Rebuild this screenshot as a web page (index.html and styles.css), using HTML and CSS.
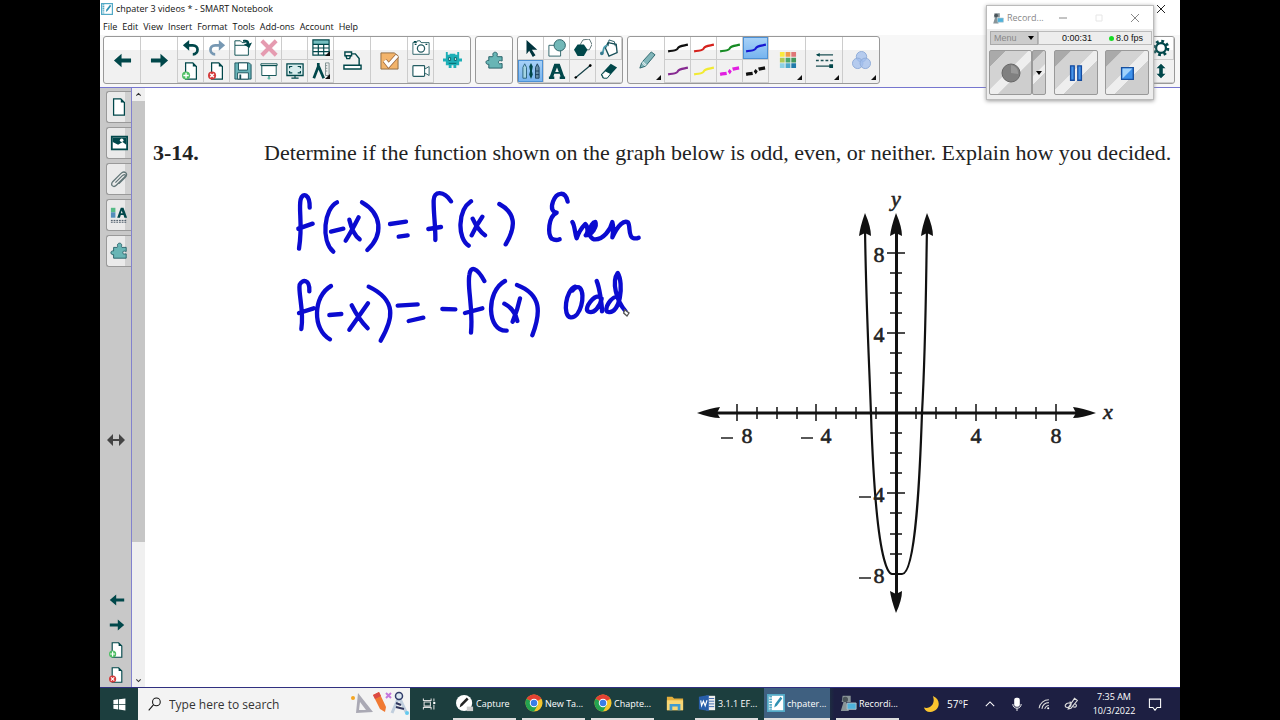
FILE: index.html
```html
<!DOCTYPE html>
<html lang="en">
<head>
<meta charset="utf-8">
<title>chpater 3 videos * - SMART Notebook</title>
<link rel="stylesheet" href="styles.css">
</head>
<body>
<svg class="sprite" aria-hidden="true">
  <symbol id="back" viewBox="0 0 20 20"><path d="M1 10 9 3v5h10v4H9v5z" fill="#00474a"/></symbol>
  <symbol id="forward" viewBox="0 0 20 20"><path d="M19 10 11 3v5H1v4h10v5z" fill="#00474a"/></symbol>
  <symbol id="page" viewBox="0 0 20 20"><path d="M4 1h8l4 4v14H4z" fill="#fff" stroke="#00474a" stroke-width="1.400"/><path d="M12 1v4h4z" fill="#00474a"/></symbol>
  <symbol id="page-add" viewBox="0 0 20 20"><use href="#page"/><circle cx="4.500" cy="15" r="4.500" fill="#4fbf65"/><path d="M4.500 12v6M1.500 15h6" stroke="#fff" stroke-width="1.500"/></symbol>
  <symbol id="page-del" viewBox="0 0 20 20"><use href="#page"/><circle cx="4.500" cy="15" r="4.500" fill="#d43b3b"/><path d="m2.500 13 4 4m0-4-4 4" stroke="#fff" stroke-width="1.500"/></symbol>
  <symbol id="puzzle" viewBox="0 0 20 20"><path d="M4 6h4c1-1 0-2 .3-3C9 .500 13 .800 13 3.500c0 1-.7 1.500.2 2.500H18v4.500c-1.500 0-2-.8-3-.3-1.200.8-1 3 .4 3.300 1 .2 1.600-.6 2.600-.3V18H4v-4c-4 .8-4-5 0-4z" fill="#68b5b5" stroke="#245f66"/></symbol>
  <symbol id="notebook" viewBox="0 0 20 20"><rect x="1" y="1" width="18" height="18" fill="#fff" stroke="#52a9c6" stroke-width="2"/><path d="M4 2v16" stroke="#52a9c6" stroke-width="3" stroke-dasharray="2 1"/><path d="M8 15 9 11l6-8 2 2-6 8z" fill="#2f91b3"/></symbol>
  <symbol id="chrome" viewBox="0 0 20 20"><circle cx="10" cy="10" r="9.500" fill="#f4c52c"/><path d="M10 10 1.800 5.300a9.500 9.500 0 0 1 16.400 0z" fill="#e34133"/><path d="M10 10 1.800 5.300A9.500 9.500 0 0 0 10 19.500l4-7z" fill="#24a350"/><circle cx="10" cy="10" r="4.700" fill="#fff"/><circle cx="10" cy="10" r="3.600" fill="#397de8"/></symbol>
  <symbol id="recorder" viewBox="0 0 20 20"><path d="M4 2h9v7H8l3 10H2L5 9H3z" fill="#899498"/><circle cx="7" cy="6" r="3" fill="#4b555b"/><path d="M9 10h10v7H9z" fill="#4eb2dc" stroke="#b6c5c9"/></symbol>
  <symbol id="squiggle" viewBox="0 0 20 20"><path d="M1 13c5-1 8 0 9-3 1-2 4-2 9-3" fill="none" stroke="currentColor"/></symbol>
  <symbol id="resize" viewBox="0 0 20 20"><path d="m1 10 6-6v5h6V4l6 6-6 6v-5H7v5z" fill="#444"/></symbol>
</svg>

<div class="desktop">
  <header class="app-head">
    <div class="titlebar"><svg class="i12"><use href="#notebook"/></svg><span>chpater 3 videos * - SMART Notebook</span>
      <button class="app-close" aria-label="Close"><svg viewBox="0 0 10 10"><path d="m1 1 8 8m0-8L1 9" stroke="#222"/></svg></button></div>
    <nav class="menubar" aria-label="Application menu"><button>File</button><button>Edit</button><button>View</button><button>Insert</button><button>Format</button><button>Tools</button><button>Add-ons</button><button>Account</button><button>Help</button></nav>
  </header>

  <div class="toolbar" role="toolbar" aria-label="Notebook tools">
    <div class="group">
      <button class="tall" aria-label="Previous page"><svg><use href="#back"/></svg></button>
      <button class="tall" aria-label="Next page"><svg><use href="#forward"/></svg></button>
      <button aria-label="Undo"><svg viewBox="0 0 20 20"><path d="M4 7h8c7 0 7 10 0 10" fill="none" stroke="#00474a" stroke-width="3"/><path d="m1 7 7-6v12z" fill="#00474a"/></svg></button>
      <button aria-label="Add page"><svg><use href="#page-add"/></svg></button>
      <button aria-label="Redo"><svg viewBox="0 0 20 20"><path d="M16 7H8c-7 0-7 10 0 10" fill="none" stroke="#7798b3" stroke-width="3"/><path d="m19 7-7-6v12z" fill="#7798b3"/></svg></button>
      <button aria-label="Delete page"><svg><use href="#page-del"/></svg></button>
      <button aria-label="Open"><svg viewBox="0 0 20 20"><path d="M1 7V2h6l2 2h4M1 7h15v11H1z" fill="#fff" stroke="#00474a"/><path d="M10 1c5-1 7 1 7 4l3-1-3 6-6-4 3-1c0-2-2-2-4-2z" fill="#00474a"/></svg></button>
      <button aria-label="Save"><svg viewBox="0 0 20 20"><path d="M1 1h16l2 2v16H1z" fill="#69b3b8" stroke="#174f58"/><path d="M5 1h10v8H5zM4 12h12v7H4z" fill="#fff" stroke="#174f58"/><path d="M7 14v5" stroke="#174f58" stroke-width="2"/></svg></button>
      <button aria-label="Delete"><svg viewBox="0 0 20 20"><path d="m2 2 16 16m0-16L2 18" stroke="#e59bb0" stroke-width="4.500"/></svg></button>
      <button aria-label="Screen shade"><svg viewBox="0 0 20 20"><path d="M1 2h18v2H1zm1 2h16v11H2z" fill="#fff" stroke="#00474a"/><path d="M10 15v3" stroke="#00474a"/><circle cx="10" cy="18" r="1.500" fill="#6ba"/></svg></button>
      <button aria-label="Unused" disabled></button>
      <button aria-label="Full screen"><svg viewBox="0 0 20 20"><path d="M1 2h18v13H1z" fill="#d7eced" stroke="#00474a" stroke-width="1.400"/><path d="M4 7V5h3m6 0h3v2M4 10v2h3m6 0h3v-2M10 15v3m-4 0h8" fill="none" stroke="#00474a" stroke-width="1.300"/></svg></button>
      <button class="more" aria-label="Table"><svg viewBox="0 0 20 20"><path d="M1 1h18v18H1z" fill="#fff"/><path d="M1 1h18v5H1z" fill="#75bec0"/><path d="M1 1h18v17H1zM1 6h18M1 10h18M1 14h18M7 6v12m6-12v12" fill="none" stroke="#00474a" stroke-width="1.300"/></svg></button>
      <button class="more" aria-label="Measurement tools"><svg viewBox="0 0 20 20"><path d="M7 1v4L2 18M7 4l6 14" fill="none" stroke="#00474a" stroke-width="3"/><path d="M15 1h4v14h-4zm0 3h2m-2 3h2m-2 3h2" fill="#eee" stroke="#798b8b"/></svg></button>
      <button class="tall" aria-label="Document camera"><svg viewBox="0 0 20 20"><path d="M2 1h7v4H2zm1 4 1 3h3l1-3M9 3h4l4 5v7" fill="none" stroke="#00474a" stroke-width="1.500"/><path d="M1 15h18v4H1z" fill="#fff" stroke="#00474a" stroke-width="1.500"/></svg></button>
      <button class="tall" aria-label="Response"><svg viewBox="0 0 20 20"><path d="M1 2h14l4 3v14H1z" fill="#f3b46b" stroke="#926d42"/><path d="m5 10 4 5 9-10" fill="none" stroke="#9b6840" stroke-width="5"/><path d="m5 10 4 5 9-10" fill="none" stroke="#fff" stroke-width="3.500"/></svg></button>
      <button aria-label="Capture image"><svg viewBox="0 0 20 20"><path d="M1 4h4l1-2h3l1 2h9v13H1z" fill="#fff" stroke="#245c62"/><circle cx="10" cy="10.500" r="4" fill="none" stroke="#245c62" stroke-width="1.400"/><path d="M3 6h2M15 6h2M2 3h3" stroke="#00474a" stroke-width="1.500"/></svg></button>
      <button aria-label="Record video"><svg viewBox="0 0 20 20"><rect x="1" y="4" width="13" height="12" rx="1" fill="#fff" stroke="#245c62" stroke-width="1.300"/><path d="m14 8 5-3v10l-5-3z" fill="#fff" stroke="#245c62"/></svg></button>
      <button class="tall" aria-label="Activity monster"><svg viewBox="0 0 20 20"><path d="M3 1h2v3h2V3h6v1h2V1h2v7h3v3h-3v4h-3v3h-3v-3H9v3H6v-3H3v-4H0V8h3z" fill="#1dafb7"/><path d="M6 7h2v3H6zm6 0h2v3h-2zM6 13h8" fill="#fff" stroke="#08666d"/></svg></button>
    </div>
    <div class="group"><button class="tall" aria-label="Add-ons"><svg><use href="#puzzle"/></svg></button></div>
    <div class="group">
      <button aria-label="Select"><svg viewBox="0 0 20 20"><path d="m5 1 12 11h-6l4 6-3 2-4-7-3 4z" fill="#00343d"/></svg></button>
      <button class="chosen" aria-label="Pens"><svg viewBox="0 0 20 20"><path d="m1 6 2-4 2 4v12H1z" fill="#a4d5e4" stroke="#285e78"/><path d="m8 5 2-4 2 4-1 5 1 4-2 5-2-5 1-4z" fill="#00474a"/><path d="m15 6 2-4 2 4v12h-4zm0 4h4m-4 4h4" fill="#668da5" stroke="#193d59"/></svg></button>
      <button aria-label="Shapes"><svg viewBox="0 0 20 20"><path d="M1 7h13v12H1z" fill="#fff" stroke="#245c62"/><circle cx="13" cy="7" r="6.300" fill="#72b8b8" stroke="#245c62"/></svg></button>
      <button aria-label="Text"><svg viewBox="0 0 20 20"><path d="M7 2h6l5 14h1v3h-6v-3h1l-1-3H7l-1 3h1v3H1v-3h1zM10 6l-2 5h4z" fill="#00474a" fill-rule="evenodd"/></svg></button>
      <button aria-label="Regular polygons"><svg viewBox="0 0 20 20"><path d="m10 1 7-1 3 6-3 6h-7L7 6z" fill="#fff" stroke="#526b6d"/><path d="M4 6h7l4 6-4 7H4l-4-7z" fill="#00474a"/></svg></button>
      <button aria-label="Line"><svg viewBox="0 0 20 20"><path d="M1 18 19 3" stroke="#143f46" stroke-width="1.300"/><circle cx="2" cy="17" r="1.300"/><circle cx="18" cy="4" r="1.500"/></svg></button>
      <button aria-label="Fill"><svg viewBox="0 0 20 20"><path d="m9 4 9 2 1 9-9 4-4-9z" fill="#fff" stroke="#174f58" stroke-width="1.500"/><path d="m9 8 1-7 6 2 1 5" fill="none" stroke="#174f58"/><path d="M8 7c-4 1-4 4-5 9" fill="none" stroke="#489cae" stroke-width="2"/><circle cx="2" cy="16" r="2" fill="#377b90"/></svg></button>
      <button aria-label="Eraser"><svg viewBox="0 0 20 20"><path d="m1 14 11-12 7 4L8 18H3z" fill="#00474a"/><path d="m2 14 4-4 6 3-4 5H4z" fill="#fff" stroke="#00474a"/></svg></button>
    </div>
    <div class="group">
      <button class="tall more" aria-label="Pen type"><svg viewBox="0 0 20 20"><path d="m3 18 2-6L15 1l4 3L9 16z" fill="#80b5b9" stroke="#2b666d"/><path d="m5 12 4 4m-3-5 4 4" stroke="#fff"/></svg></button>
      <button class="ink-pen black" aria-label="Black pen"><svg><use href="#squiggle"/></svg></button>
      <button class="ink-pen purple" aria-label="Purple pen"><svg><use href="#squiggle"/></svg></button>
      <button class="ink-pen red" aria-label="Red pen"><svg><use href="#squiggle"/></svg></button>
      <button class="ink-pen yellow" aria-label="Yellow pen"><svg><use href="#squiggle"/></svg></button>
      <button class="ink-pen green" aria-label="Green pen"><svg><use href="#squiggle"/></svg></button>
      <button class="ink-pen magenta dashed" aria-label="Magenta dashed pen"><svg><use href="#squiggle"/></svg></button>
      <button class="ink-pen blue chosen" aria-label="Blue pen"><svg><use href="#squiggle"/></svg></button>
      <button class="ink-pen black dashed" aria-label="Black dashed pen"><svg><use href="#squiggle"/></svg></button>
      <button class="tall more" aria-label="Colors"><svg viewBox="0 0 20 20"><path d="M2 1h5v5H2z" fill="#fbea3d"/><path d="M8 1h5v5H8z" fill="#f09b49"/><path d="M14 1h5v5h-5z" fill="#df7777"/><path d="M2 7h5v5H2z" fill="#b0c956"/><path d="M8 7h5v5H8z" fill="#4aa56c"/><path d="M14 7h5v5h-5z" fill="#42975c"/><path d="M2 13h5v5H2z" fill="#8dd1e5"/><path d="M8 13h5v5H8z" fill="#4ba8cb"/><path d="M14 13h5v5h-5z" fill="#207baa"/></svg></button>
      <button class="tall more" aria-label="Line style"><svg viewBox="0 0 20 20"><path d="M2 4h17M1 16h15" stroke="#1d5054" stroke-width="1.300"/><path d="M1 10h18" stroke="#1d5054" stroke-width="1.500" stroke-dasharray="3 2"/><path d="m1 4 4-2v4zm14 10h4v4h-4z" fill="#00474a"/></svg></button>
      <button class="tall more" aria-label="Transparency"><svg viewBox="0 0 20 20"><g fill="#a0bdec" fill-opacity=".75" stroke="#8facd8"><circle cx="10" cy="6" r="5.500"/><circle cx="6" cy="13" r="5.500"/><circle cx="14" cy="13" r="5.500"/></g></svg></button>
    </div>
    <div class="group settings">
      <button aria-label="Settings"><svg viewBox="0 0 20 20"><circle cx="10" cy="10" r="7.500" fill="none" stroke="#00474a" stroke-width="3.500" stroke-dasharray="3 2.900"/><circle cx="10" cy="10" r="5.500" fill="none" stroke="#00474a" stroke-width="2.500"/></svg></button>
      <button aria-label="Move toolbar"><svg viewBox="0 0 20 20"><path d="m10 2 5 5h-3v6h3l-5 5-5-5h3V7H5z" fill="#00474a"/></svg></button>
    </div>
  </div>

  <main class="workspace">
    <aside class="sidebar">
      <div class="tabs">
        <button aria-label="Page sorter"><svg><use href="#page"/></svg></button>
        <button aria-label="Gallery"><svg viewBox="0 0 20 20"><path d="M2 3h17v14H2z" fill="#fff" stroke="#00474a" stroke-width="2"/><path d="M3 4h15v8l-4-3-5 3-6-3z" fill="#00474a"/><circle cx="13" cy="7" r="2" fill="#fff"/></svg></button>
        <button aria-label="Attachments"><svg viewBox="0 0 20 20"><path d="M6 14 14 6c3-2 4 0 2 2l-9 9c-3 3-7 0-4-4l9-9c4-4 9 0 5 4l-7 7" fill="none" stroke="#617577" stroke-width="1.400"/></svg></button>
        <button aria-label="Properties"><svg viewBox="0 0 20 20"><path d="M1 2h5v5H1z" fill="#56bb86"/><path d="M1 7h5v6H1z" fill="#548ebc"/><path d="M12 2h3l4 11h-3l-1-3h-3l-1 3H8zm1 3-1 3h2z" fill="#00474a" fill-rule="evenodd"/><path d="M1 16h18M1 18h18" stroke="#345" stroke-dasharray="2 1"/></svg></button>
        <button aria-label="Add-on tab"><svg><use href="#puzzle"/></svg></button>
      </div>
      <div class="resizer"><button aria-label="Resize sidebar"><svg><use href="#resize"/></svg></button></div>
      <div class="page-actions">
        <button aria-label="Previous"><svg><use href="#back"/></svg></button>
        <button aria-label="Next"><svg><use href="#forward"/></svg></button>
        <button aria-label="New page"><svg><use href="#page-add"/></svg></button>
        <button aria-label="Remove page"><svg><use href="#page-del"/></svg></button>
      </div>
    </aside>
    <div class="scrollbar" aria-hidden="true">
      <svg viewBox="0 0 12 12"><path d="m4 7 2-2 2 2" fill="none" stroke="#333"/></svg>
      <span class="thumb"></span><span class="track"></span>
      <svg viewBox="0 0 12 12"><path d="m4 5 2 2 2-2" fill="none" stroke="#333"/></svg>
    </div>
    <article class="lesson">
      <div class="question"><strong>3-14.</strong><p>Determine if the function shown on the graph below is odd, even, or neither. Explain how you decided.</p></div>
      <div class="work">
        <svg class="ink" viewBox="0 0 1140 510" role="img" aria-label="Handwritten: f(-x) = f(x) Even, f(-x) = -f(x) Odd">
          <g fill="none" stroke="#0b0bd0" stroke-width="13" stroke-linecap="round" stroke-linejoin="round">
            <path d="M89 83C90 42 68 36 62 58 55 90 69 130 57 206M55 146l43-15M171 67C132 86 122 181 160 215M153 155l37-9M208 119q10 43 31 59M236 112q-22 43-39 70M246 67C306 101 311 165 262 210M330 132l48-7M356 170l27-4"/>
            <path d="M513 64C492 32 461 32 461 61c-1 37 6 77 5 119M445 147l38-6M573 64C532 92 532 176 566 197M578 116q16 35 37 50M607 110q-17 24-32 56M658 72c47 26 53 64 19 121"/>
            <path d="M863 65C856 31 829 36 819 65c-8 22 0 31 11 33-26 12-27 65-15 78q12 7 24 2M877 126c8 11 7 33 13 49 5-15 11-28 26-43 9 9 8 29 1 34 19-1 35-27 29-40-16 1-27 46-4 52 28 3 50-30 55-52 5 17 2 33 0 46 18-39 35-52 47-45 8 13 0 41 15 47q8 3 17-1"/>
            <path d="M88 334C90 297 67 297 59 314c-5 25 14 80 5 133M57 399l44-14M153 318C98 349 97 449 150 478M148 405l36-3M215 376q21 42 48 69M264 370q-26 37-56 79M266 320C352 361 340 416 302 482M353 377l60-4M386 423l44-10"/>
            <path d="M487 387l39 1M613 303C591 262 571 256 568 285c-7 41 12 92 5 173M555 399l52-14M675 303C616 335 621 456 680 452M673 371q31 16 39 52M720 355q-7 33-22 70M711 315C787 344 782 400 757 466"/>
            <path d="M886 320C856 330 847 409 872 412c29 3 46-68 28-88q-9-8-22 7M950 303c8 18 16 71 16 91M960 351c-17-9-49 33-36 43 18 10 37-16 41-38M1017 351c-21-8-51 41-32 45 36 7 47-86 28-117-18 25-5 83 24 115"/>
          </g>
          <path d="m1034 389 13 10-6 9-10-9z" fill="#fff" stroke="#555" stroke-width="4"/>
        </svg>
        <svg class="graph" viewBox="0 0 450 440" role="img" aria-label="Graph of an even function with minimum at negative eight">
          <g fill="none" stroke="#111" stroke-width="1.500">
            <path d="M57 224v17M77 227v12M97 227v12M117 227v12M136 224v17M156 227v12M176 227v12M196 227v12M236 227v12M256 227v12M276 227v12M296 224v17M316 227v12M336 227v12M356 227v12M376 224v17"/>
            <path d="M207 73h18M210 93h12M210 113h12M210 133h12M207 153h18M210 173h12M210 193h12M210 213h12M210 253h12M210 273h12M210 293h12M207 313h18M210 333h12M210 354h12M210 374h12"/>
            <path stroke-width="3" d="M28 233h376M216.500 45v374"/>
            <path stroke-width="2.200" d="M185 48C186 125 189 178 191 234c2 60 5 115 13 145q4 15 8 15h10C236 394 240 292 242 233 246 160 246 95 247 48"/>
          </g>
          <path fill="#111" d="M17 233q14-5 23-6l-3 6 3 5q-9 0-23-5M416 233q-14-5-23-6l3 6-3 5q9 0 23-5M216 33q-5 14-6 23l6-3 6 3q0-9-6-23M185 33q-5 14-6 23l6-3 6 3q0-9-6-23M247 33q-5 14-6 23l6-3 6 3q0-9-6-23M216 433q-5-14-6-22l6 3 6-3q0 9-6 22"/>
          <g class="labels"><text x="199" y="82">8</text><text x="199" y="162">4</text><text x="199" y="322">4</text><text x="199" y="403">8</text><text x="67" y="263">8</text><text x="146" y="263">4</text><text x="296" y="263">4</text><text x="376" y="263">8</text><text class="axis" x="216" y="26">y</text><text class="axis" x="428" y="239">x</text></g>
          <path d="M41 258h12M121 258h12M179 317h12M179 398h12" stroke="#222" stroke-width="1.500"/>
        </svg>
      </div>
    </article>
  </main>

  <footer class="taskbar">
    <button class="start" aria-label="Start"><svg viewBox="0 0 20 20"><path d="M3 5 9 4v6H3zm7-1 8-1v7h-8zM3 11h6v6l-6-1zm7 0h8v7l-8-1z" fill="#fff"/></svg></button>
    <label class="search"><svg class="i14" viewBox="0 0 20 20"><circle cx="12" cy="7" r="5.500" fill="none" stroke="#111" stroke-width="1.500"/><path d="m8 11-7 8" stroke="#111" stroke-width="1.500"/></svg><input type="text" placeholder="Type here to search" aria-label="Type here to search">
      <svg class="tools-art" viewBox="0 0 60 28"><circle cx="3" cy="8" r="2" fill="#f5a623"/><path d="m8 3 15 19-17 1zm2 9-1 8h7z" fill="#aaa9b4" fill-rule="evenodd"/><path d="m23 5 6-3 7 15-1 5-5-3z" fill="#f07932"/><path d="m23 5 6-3 2 4-6 3z" fill="#db4944"/><path d="m36 3 5 5m0-5-5 5" stroke="#c477dc" stroke-width="2"/><path d="m48 9-6 14M50 9l6 13" stroke="#c0cedd" stroke-width="3"/><circle cx="49" cy="6" r="3.500" fill="#dce8f0" stroke="#313c69" stroke-width="1.500"/><path d="m46 17 8 2M46 13l5 2" stroke="#30375d" stroke-width="2"/><circle cx="57" cy="23" r="2" fill="#64c9ee"/></svg></label>
    <button class="task-view" aria-label="Task view"><svg viewBox="0 0 20 20"><path d="M2 2v3h11V2M3 7h9v6H3zM2 18v-3h11v3M17 2v4m0 5v7" fill="none" stroke="#ddd" stroke-width="1.500"/><path d="M16 7h3v3h-3z" fill="#fff"/></svg></button>
    <div class="tasks">
      <button><svg viewBox="0 0 20 20"><circle cx="9" cy="10" r="9" fill="#fff"/><path d="m4 15 1-4 7-7 2 2-7 7z" fill="#222"/><path d="M12 14h7v5h-7z" fill="#ccc"/></svg><span>Capture</span></button>
      <button><svg><use href="#chrome"/></svg><span>New Ta...</span></button>
      <button><svg><use href="#chrome"/></svg><span>Chapte...</span></button>
      <button class="folder" aria-label="File Explorer"><svg viewBox="0 0 20 20"><path d="M1 3h6l2 2h10v13H1z" fill="#e4ae3d"/><path d="M1 7h18v11H1z" fill="#f8d775"/><path d="M4 11h12v7h-3v-4H7v4H4z" fill="#3e9bd0"/></svg></button>
      <button><svg viewBox="0 0 20 20"><path d="M9 2h10v16H9z" fill="#eee"/><path d="M12 5h6m-6 3h6m-6 3h6m-6 3h6" stroke="#3563ab"/><path d="M1 3 12 1v18L1 17z" fill="#285eaa"/><path d="m3 7 1 6 2-5 2 5 2-6" fill="none" stroke="#fff" stroke-width="1.300"/></svg><span>3.1.1 EF...</span></button>
      <button class="current"><svg><use href="#notebook"/></svg><span>chpater...</span></button>
      <button><svg><use href="#recorder"/></svg><span>Recordi...</span></button>
    </div>
    <div class="tray">
      <button class="weather"><svg viewBox="0 0 20 20"><path d="M11 1c10 4 8 17-3 18-4 0-6-2-7-5 8 2 13-5 10-13" fill="#fac42f"/></svg><span>57°F</span></button>
      <button aria-label="Hidden icons"><svg viewBox="0 0 20 20"><path d="m4 13 6-6 6 6" fill="none" stroke="#fff" stroke-width="1.500"/></svg></button>
      <button aria-label="Microphone"><svg viewBox="0 0 20 20"><rect x="6" y="1" width="8" height="13" rx="3" fill="#fff"/><path d="M4 10c0 8 12 8 12 0m-6 6v4" fill="none" stroke="#fff" stroke-width="1.300"/></svg></button>
      <button aria-label="Network"><svg viewBox="0 0 20 20"><path d="M3 16C4 9 10 4 17 4M7 17c1-6 5-9 10-9M11 17c1-3 3-5 6-5" fill="none" stroke="#ddd" stroke-width="1.500"/><circle cx="16" cy="16" r="1.500" fill="#fff"/></svg></button>
      <button aria-label="Pen menu"><svg viewBox="0 0 20 20"><path d="m7 14 8-12 4 3-9 11-4 1zM9 9c-7-2-10 6-4 6 5 0 7-7 3-8M13 14c5 2 6-3 3-4" fill="none" stroke="#ddd" stroke-width="1.600"/></svg></button>
      <button class="clock"><span>7:35 AM</span><span>10/3/2022</span></button>
      <button class="notice" aria-label="Notifications"><svg viewBox="0 0 20 20"><path d="M2 3h16v12h-5l-3 4-3-4H2z" fill="none" stroke="#fff" stroke-width="1.500"/></svg></button>
    </div>
  </footer>

  <section class="recorder" aria-label="Recorder">
    <div class="rec-title"><svg class="i12"><use href="#recorder"/></svg><span>Record...</span><button aria-label="Minimize"><svg viewBox="0 0 10 10"><path d="M1 5h8" stroke="#888"/></svg></button><button aria-label="Maximize" disabled><svg viewBox="0 0 10 10"><path d="M2 2h6v6H2z" fill="none" stroke="#e6e6e6"/></svg></button><button aria-label="Close recorder"><svg viewBox="0 0 10 10"><path d="m1 1 8 8m0-8L1 9" stroke="#888"/></svg></button></div>
    <div class="rec-status"><button class="rec-menu">Menu<svg viewBox="0 0 6 6"><path d="M0 1h6L3 5z"/></svg></button><div class="stats"><span>0:00:31</span><span class="fps">8.0 fps</span></div></div>
    <div class="rec-controls">
      <div class="record-pair"><button aria-label="Record"><svg viewBox="0 0 20 20"><circle cx="10" cy="10" r="9" fill="#808080" stroke="#666"/><path d="M10 2a8 8 0 0 1 7 9l-7-1z" fill="#999"/></svg></button><button class="rec-more" aria-label="Record options"><svg viewBox="0 0 6 6"><path d="M0 1h6L3 5z"/></svg></button></div>
      <button class="shiny" aria-label="Pause"><svg viewBox="0 0 20 20"><path d="M4 2h4v16H4zm8 0h4v16h-4z" fill="#4594ea" stroke="#154b9f" stroke-width="1.500"/></svg></button>
      <button class="shiny" aria-label="Stop"><svg viewBox="0 0 20 20"><path d="M4 4h13v13H4z" fill="#3e91eb" stroke="#164f9f" stroke-width="1.500"/><path d="M5 5h11L5 16z" fill="#a1d2fb"/></svg></button>
    </div>
  </section>
</div>
</body>
</html>
```
FILE: styles.css
```css
* { box-sizing: border-box; }
body { margin: 0; padding: 0 100px; background: #000; font-family: "Open Sans", "Noto Sans", sans-serif; color: #222; }
button { font: inherit; color: inherit; padding: 0; margin: 0; border: 0; background: transparent; }
button svg { display: block; width: 20px; height: 20px; }
p { margin: 0; }
.sprite { position: absolute; width: 0; height: 0; }
.i12 { width: 12px; height: 12px; }
.i14 { width: 14px; height: 14px; }
.desktop { position: relative; display: flex; flex-direction: column; min-height: 100vh; background: #fff; overflow: hidden; }

.titlebar { display: flex; align-items: center; gap: 3px; height: 17px; padding-left: 1px; font-size: 9px; color: #111; }
.app-close { margin-left: auto; margin-right: 14px; }
.app-close svg { width: 10px; height: 10px; }
.menubar { display: flex; gap: 5px; height: 18px; padding-left: 3px; font-size: 9px; align-items: center; color: #111; }

.toolbar { display: flex; gap: 4px; padding: 1px 5px 3px 3px; background: #f7f7f7; border-bottom: 1px solid #7676cf; }
.group { display: grid; grid-template-rows: 23px 23px; grid-auto-flow: column; border: 1px solid #999; border-radius: 3px; background: linear-gradient(#fff 28%, #f1f1f1 28%); overflow: hidden; }
.group button { display: grid; place-items: center; width: 26px; border-right: 1px solid #ccc; border-bottom: 1px solid #ccc; position: relative; }
.group button svg { width: 18px; height: 18px; }
.group .tall { grid-row: span 2; width: 37px; border-bottom: 0; }
.group .tall svg { width: 19px; height: 19px; }
.group > :last-child { width: 25px; border-right: 0; }
.group > .tall:last-child { width: 36px; }
.group .chosen { background: linear-gradient(#a9d2f8, #75b3ef); box-shadow: inset 0 0 0 1px #4d91d5; }
.more::after { content: ""; position: absolute; right: 3px; bottom: 3px; border-left: 5px solid transparent; border-bottom: 5px solid #111; }
.group .ink-pen svg { width: 22px; height: 22px; stroke-width: 2px; }
.group .dashed svg { stroke-width: 3px; stroke-dasharray: 6 2 3 2; }
.black { color: #111; }
.purple { color: #872a91; }
.red { color: #d5221d; }
.yellow { color: #f1ea32; }
.green { color: #178b24; }
.magenta { color: #e11ee0; }
.blue { color: #1717d2; }
.settings { margin-left: auto; }

.workspace { flex: 1; display: flex; min-height: 0; }
.sidebar { display: flex; flex-direction: column; width: 32px; background: #c8c8c8; padding: 3px 0 0 6px; border-right: 1px solid #8282ce; }
.sidebar button { display: grid; place-items: center; }
.sidebar svg { width: 18px; height: 18px; }
.tabs { display: grid; gap: 4px; }
.tabs button { height: 32px; background: linear-gradient(90deg, #eaeaea 75%, #d0d0d0 75%); border: 1px solid #999; border-right: 0; border-radius: 3px 0 0 3px; }
.resizer { flex: 1; display: grid; place-items: center; padding: 0 6px 0 0; margin-bottom: -26px; margin-top: 0; }
.resizer svg { width: 20px; height: 20px; }
.page-actions { display: grid; padding-right: 3px; }
.page-actions button { height: 25px; }
.page-actions svg { width: 16px; height: 16px; }
.scrollbar { display: flex; flex-direction: column; width: 13px; background: #f0f0f0; }
.scrollbar svg { width: 13px; height: 13px; }
.thumb { flex: 77; background: #c6c6c6; }
.track { flex: 23; }
.lesson { flex: 1; min-width: 0; padding: 51px 0 0 8px; background: #fff; font-family: "Liberation Serif", serif; }
.question { display: flex; font-size: 22px; line-height: 28px; white-space: nowrap; color: #222; }
.question strong { flex: 0 0 111px; }
.work { display: flex; flex-wrap: wrap; justify-content: space-between; padding: 13px 50px 0 127px; }
.ink { width: 380px; height: 170px; }
.graph { width: 450px; height: 440px; }
.labels { font: 22px "Liberation Serif", serif; fill: #222; stroke: #222; stroke-width: .6px; text-anchor: middle; }
.axis { font-style: italic; }

.taskbar { display: flex; height: 33px; border-top: 1px solid #303080; background: linear-gradient(90deg, #1c3e3e 67%, #1d1f42 68%); color: #fff; font-size: 10px; }
.start { width: 38px; display: grid; place-items: center; }
.start svg { width: 16px; height: 16px; }
.search { display: flex; align-items: center; gap: 7px; width: 272px; padding: 0 0 0 10px; background: #f3f3f3; }
.search input { flex: 1; min-width: 0; padding: 0; border: 0; background: transparent; font: 12px "Noto Sans", sans-serif; font-family: "Open Sans", sans-serif; }
.search input::placeholder { color: #333; opacity: 1; }
.tools-art { width: 60px; height: 28px; }
.task-view { width: 37px; margin-right: 3px; display: grid; place-items: center; }
.task-view svg { width: 14px; height: 14px; }
.tasks { display: flex; gap: 6px; padding-left: 3px; }
.tasks button { display: flex; align-items: center; gap: 2px; width: 63px; padding-left: 3px; border-bottom: 2px solid #ddd; white-space: nowrap; font-size: 9px; }
.tasks svg { flex: none; width: 18px; height: 18px; }
.tasks .folder { width: 29px; padding-left: 6px; border-color: transparent; }
.tasks .current { width: 66px; background: #3f6080; }
.tray { display: flex; align-items: center; margin-left: auto; padding-right: 14px; }
.tray button { width: 27px; display: grid; place-items: center; }
.tray svg { width: 14px; height: 14px; }
.tray .weather { display: flex; gap: 6px; width: auto; margin-right: 8px; }
.tray .weather svg { width: 18px; height: 18px; }
.tray .clock { width: 60px; font-size: 9px; line-height: 14px; }
.tray .notice { width: 22px; }

.recorder { position: absolute; top: 5px; right: 26px; width: 168px; background: #ededed; border: 1px solid #bbb; box-shadow: 0 1px 4px #999; }
.rec-title { display: flex; align-items: center; height: 23px; padding: 0 13px 0 5px; background: #fff; color: #888; font-size: 9px; }
.rec-title span { flex: 1; padding-left: 3px; }
.rec-title button { margin-left: 26px; }
.rec-title span + button { margin-left: 0; }
.rec-title button svg { width: 10px; height: 10px; }
.rec-status { display: flex; height: 17px; padding: 2px 1px 1px 3px; font: 9px "Liberation Sans", sans-serif; }
.rec-menu { display: flex; justify-content: space-between; align-items: center; width: 48px; padding: 0 3px; background: #ccc; border: 1px solid #aaa; color: #888; }
.rec-menu svg { width: 6px; height: 6px; }
.stats { flex: 1; display: flex; justify-content: space-between; align-items: center; padding: 0 8px 0 23px; border: 1px solid #bbb; color: #111; }
.fps::before { content: ""; display: inline-block; width: 5px; height: 5px; margin-right: 2px; border-radius: 50%; background: #17dc24; }
.rec-controls { display: flex; justify-content: space-between; padding: 4px 4px 4px 2px; }
.rec-controls button { display: grid; place-items: center; height: 45px; border: 1px solid #999; border-radius: 2px; background: linear-gradient(135deg, #aaa 18%, #d3d3d3 19% 45%, #eee 46% 60%, #cecece 61%); }
.record-pair { display: flex; }
.record-pair button { width: 43px; }
.record-pair .rec-more { width: 14px; }
.rec-controls .rec-more svg { width: 6px; height: 6px; }
.rec-controls .shiny { width: 44px; }
.rec-controls .shiny svg { width: 18px; height: 18px; }
```
